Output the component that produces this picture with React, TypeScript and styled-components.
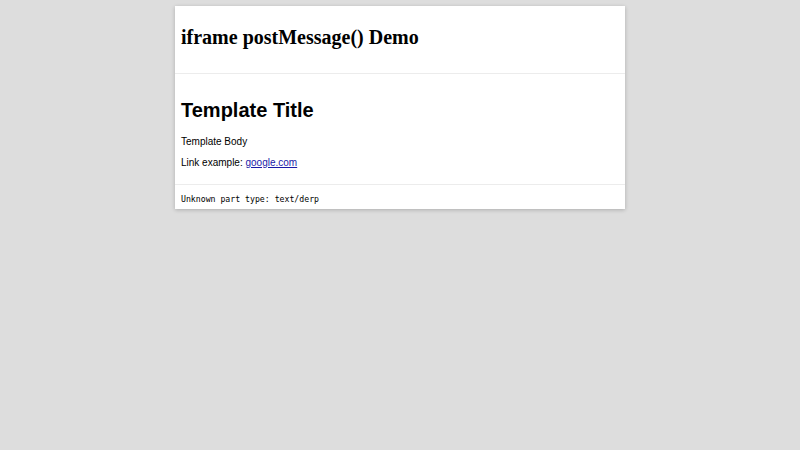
import React from "react";
import styled, { createGlobalStyle } from "styled-components";

const Global = createGlobalStyle`
  html, body {
    margin: 0;
    padding: 0;
    background: #dddddd;
    min-height: 100%;
  }
  body {
    font-family: "Liberation Sans", Arial, sans-serif;
    color: #000;
  }
`;

const Page = styled.div`
  display: flex;
  justify-content: center;
  padding-top: 6px;
  min-height: 450px;
  box-sizing: border-box;
`;

const Card = styled.div`
  width: 450px;
  align-self: flex-start;
  background: #ffffff;
  box-shadow: 0 1px 4px rgba(0, 0, 0, 0.22);
  display: flex;
  flex-direction: column;
`;

const Header = styled.header`
  padding: 20px 6px 24px;
  border-bottom: 1px solid #ececec;
`;

const Heading = styled.h1`
  margin: 0;
  font-family: "Liberation Serif", "Times New Roman", serif;
  font-size: 20px;
  font-weight: bold;
  line-height: 23px;
`;

const Content = styled.section`
  padding: 25px 6px 16px;
  display: flex;
  flex-direction: column;
`;

const Title = styled.h2`
  margin: 0 0 14px;
  font-size: 20px;
  font-weight: bold;
  line-height: 23px;
`;

const Paragraph = styled.p<{ $gap?: number }>`
  margin: 0 0 ${(p) => p.$gap ?? 0}px;
  font-size: 10px;
  line-height: 11.5px;
`;

const Link = styled.a`
  color: #1a1aa8;
  text-decoration: underline;
`;

const Footer = styled.footer`
  border-top: 1px solid #ececec;
  padding: 9px 6px 5px;
  font-family: "DejaVu Sans Mono", "Liberation Mono", monospace;
  font-size: 8.2px;
  line-height: 10px;
`;

export default function App() {
  return (
    <>
      <Global />
      <Page>
        <Card>
          <Header>
            <Heading>iframe postMessage() Demo</Heading>
          </Header>
          <Content>
            <Title>Template Title</Title>
            <Paragraph $gap={9}>Template Body</Paragraph>
            <Paragraph>
              Link example: <Link href="#">google.com</Link>
            </Paragraph>
          </Content>
          <Footer>Unknown part type: text/derp</Footer>
        </Card>
      </Page>
    </>
  );
}
